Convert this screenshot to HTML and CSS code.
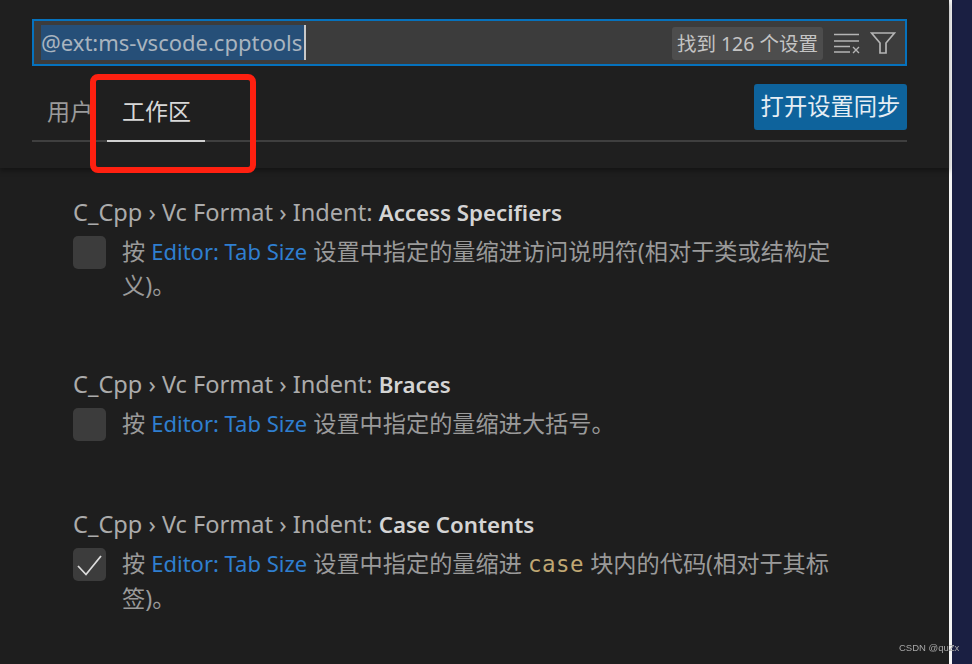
FILE: index.html
```html
<!DOCTYPE html>
<html lang="zh-CN">
<head>
  <meta charset="UTF-8">
  <title>Settings</title>
  <link rel="stylesheet" href="styles.css">
</head>
<body>
  <div class="editor">
    <div class="header">
      <div class="search-box">
        <div class="search-field"><span class="search-text">@ext:ms-vscode.cpptools</span></div>
        <span class="count">找到 126 个设置</span>
        <svg class="icon-clear" width="27" height="22" viewBox="0 0 27 22" fill="none" stroke="#b4b4b4" stroke-width="1.6">
          <path d="M1 2.5H26M1 9H26M1 14.5H17M1 20H17"/>
          <path d="M20 15L26 21M26 15L20 21" stroke-width="1.4"/>
        </svg>
        <svg class="icon-filter" width="26" height="24" viewBox="0 0 26 24" fill="none" stroke="#b4b4b4" stroke-width="1.7">
          <path d="M1.5 2H24.5L16 12V22H10V12Z"/>
        </svg>
      </div>
      <div class="tab-row">
        <div class="tabs">
          <a class="tab">用户</a>
          <a class="tab active">工作区</a>
        </div>
        <button class="sync-btn">打开设置同步</button>
      </div>
    </div>

    <div class="settings">
      <div class="setting">
        <div class="setting-title">C_Cpp › Vc Format › Indent: <b>Access Specifiers</b></div>
        <div class="setting-row">
          <span class="checkbox"></span>
          <p>按 <a>Editor: Tab Size</a> 设置中指定的量缩进访问说明符(相对于类或结构定<br>义)。</p>
        </div>
      </div>
      <div class="setting short">
        <div class="setting-title">C_Cpp › Vc Format › Indent: <b>Braces</b></div>
        <div class="setting-row">
          <span class="checkbox"></span>
          <p>按 <a>Editor: Tab Size</a> 设置中指定的量缩进大括号。</p>
        </div>
      </div>
      <div class="setting">
        <div class="setting-title">C_Cpp › Vc Format › Indent: <b>Case Contents</b></div>
        <div class="setting-row">
          <span class="checkbox">
            <svg width="33" height="33" viewBox="0 0 33 33" fill="none" stroke="#dcdcdc" stroke-width="1.8">
              <path d="M5 18L13 26.5L28 8"/>
            </svg>
          </span>
          <p>按 <a>Editor: Tab Size</a> 设置中指定的量缩进 <code>case</code> 块内的代码(相对于其标<br>签)。</p>
        </div>
      </div>
    </div>

    <div class="highlight"></div>
    <div class="watermark">CSDN @quZx</div>
  </div>
  <div class="divider"></div>
  <div class="sidebar"></div>
</body>
</html>
```

FILE: styles.css
```css
* {
  box-sizing: border-box;
}

html, body {
  height: 100%;
}

body {
  margin: 0;
  display: flex;
  overflow: hidden;
  background-color: #1a1f42;
  font-family: "Noto Sans", "Noto Sans CJK SC", sans-serif;
}

.editor {
  position: relative;
  width: 949px;
  background-color: #1e1e1e;
  filter: blur(0.6px);
}

.divider {
  width: 3px;
  background-color: #f4f4f4;
}

.sidebar {
  flex: 1;
  background-color: #1a1f42;
}

/* header with search and tabs */
.header {
  height: 168px;
  padding: 19px 42px 0 32px;
  background-color: #1f1f1f;
  box-shadow: 0 3px 5px rgba(0, 0, 0, 0.35);
}

.search-box {
  display: flex;
  align-items: center;
  height: 47px;
  padding: 0 9px 0 7px;
  background-color: #3c3c3c;
  border: 2px solid #0672bd;
}

.search-field {
  flex: 1;
}

.search-text {
  display: inline-block;
  height: 35px;
  padding-right: 2px;
  font-size: 22px;
  line-height: 35px;
  color: #a9b4bf;
  background-color: #264f78;
  border-right: 2px solid #c8c8c8;
}

.count {
  height: 33px;
  padding: 0 5px;
  margin: 2px 10px 0 0;
  font-size: 19.5px;
  line-height: 33px;
  white-space: nowrap;
  color: #c4c4c4;
  background-color: #4d4d4d;
  border-radius: 3px;
}

.icon-filter {
  margin-left: 10px;
}

.tab-row {
  display: flex;
  justify-content: space-between;
  height: 76px;
  border-bottom: 2px solid #3f3f3f;
}

.tabs {
  display: flex;
  align-items: stretch;
}

.tab {
  padding: 29px 14px 0 15px;
  font-size: 23px;
  line-height: 32px;
  color: #9a9a9a;
}

.tab.active {
  width: 98px;
  margin-bottom: -2px;
  color: #d8d8d8;
  border-bottom: 2px solid #d0d0d0;
}

.sync-btn {
  width: 153px;
  height: 46px;
  margin-top: 18px;
  padding: 0 0 4px;
  font-family: inherit;
  font-size: 23.3px;
  color: #e6eef4;
  background-color: #0e639c;
  border: none;
  border-radius: 3px;
}

/* settings list */
.settings {
  padding: 27px 42px 0 73px;
}

.setting {
  height: 172px;
}

.setting.short {
  height: 140px;
}

.setting-title {
  height: 41px;
  font-size: 23.6px;
  line-height: 34px;
  white-space: nowrap;
  color: #ababab;
}

.setting-title b {
  font-size: 22.3px;
  font-weight: 600;
  color: #d4d4d4;
}

.setting-row {
  display: flex;
  gap: 16px;
}

.checkbox {
  flex: none;
  width: 33px;
  height: 33px;
  background-color: #3c3c3c;
  border-radius: 5px;
}

.checkbox svg {
  display: block;
}

.setting-row p {
  margin: -2px 0 0;
  font-size: 23.2px;
  line-height: 34px;
  color: #9a9a9a;
}

.setting-row a {
  font-size: 22px;
  color: #2f7fd0;
}

.setting-row code {
  font-family: "DejaVu Sans Mono", monospace;
  font-size: 22.5px;
  letter-spacing: 0.5px;
  color: #c0a873;
}

/* annotation drawn on the screenshot */
.highlight {
  position: absolute;
  left: 90px;
  top: 74px;
  width: 166px;
  height: 99px;
  border: 6px solid #ff2010;
  border-radius: 8px;
}

.watermark {
  position: absolute;
  left: 899px;
  top: 641px;
  font-family: "Liberation Sans", sans-serif;
  font-size: 9.5px;
  line-height: 14px;
  white-space: nowrap;
  color: #a8a8a8;
}
```
